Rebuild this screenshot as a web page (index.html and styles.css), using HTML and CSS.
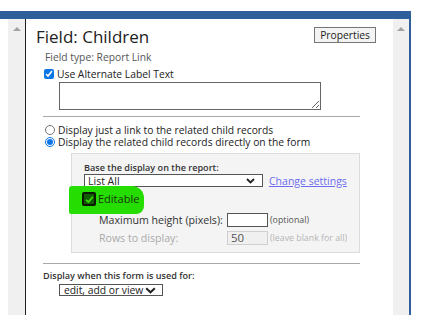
FILE: index.html
```html
<!DOCTYPE html>
<html lang="en">
<head>
    <meta charset="UTF-8">
    <title>Field: Children</title>
    <link rel="stylesheet" href="styles.css">
</head>
<body>
    <div id="frame">
        <div class="gutter"></div>
        <div class="scrollbar"><span class="arrow"></span></div>
        <div id="panel">
            <div class="head">
                <h1>Field: Children</h1>
                <button class="props">Properties</button>
            </div>
            <div class="body">
                <div class="type">Field type: Report Link</div>
                <label class="check"><input type="checkbox" checked>Use Alternate Label Text</label>
                <textarea class="alt-label"></textarea>
                <hr>
                <label class="radio"><input type="radio" name="display">Display just a link to the related child records</label>
                <label class="radio"><input type="radio" name="display" checked>Display the related child records directly on the form</label>

                <div class="options">
                    <div class="opt-label">Base the display on the report:</div>
                    <div class="report-row">
                        <span class="select report">List All
                            <svg width="9" height="6" viewBox="0 0 9 6"><path d="M1 1 L4.5 4.5 L8 1" fill="none" stroke="#222" stroke-width="1.8"/></svg>
                        </span>
                        <a href="#" class="change">Change settings</a>
                    </div>
                    <div class="editable">
                        <span class="box">
                            <svg width="9" height="9" viewBox="0 0 9 9"><path d="M1.2 4.8 L3.5 7 L7.8 1.8" fill="none" stroke="#3be000" stroke-width="1.7"/></svg>
                        </span>
                        <span>Editable</span>
                    </div>
                    <div class="sizes">
                        <span>Maximum height (pixels):</span>
                        <span class="field"></span>
                        <span class="note">(optional)</span>
                        <span class="dim">Rows to display:</span>
                        <span class="field off">50</span>
                        <span class="note dim">(leave blank for all)</span>
                    </div>
                </div>

                <hr class="lower">
                <div class="opt-label">Display when this form is used for:</div>
                <span class="select mode">edit, add or view
                    <svg width="11" height="7" viewBox="0 0 11 7"><path d="M1.2 1.2 L5.5 5.3 L9.8 1.2" fill="none" stroke="#222" stroke-width="2"/></svg>
                </span>
            </div>
        </div>
        <div class="scrollbar right"><span class="arrow"></span></div>
    </div>
</body>
</html>
```

FILE: styles.css
```css
body {
    margin: 0;
    background-color: #ffffff;
    font-family: "Open Sans", "Noto Sans", sans-serif;
    color: #333;
}
#frame {
    display: flex;
    margin-top: 11px;
    width: 409px;
    height: 296px;
    border-top: 8px solid #2e5f9b;
    border-right: 2px solid #2e5f9b;
    overflow: hidden;
}
.gutter {
    width: 8px;
    background-color: #ffffff;
}
.scrollbar {
    width: 17px;
    background-color: #f0f0f0;
    display: flex;
    justify-content: center;
    padding-top: 8px;
    box-sizing: border-box;
}
.scrollbar.right {
    width: 16px;
}
.arrow {
    width: 0;
    height: 0;
    border-left: 4px solid transparent;
    border-right: 4px solid transparent;
    border-bottom: 4px solid #a3a3a3;
}
#panel {
    flex: 1;
    border-left: 1px solid #1e1e1e;
    background-color: #ffffff;
}
.head {
    display: flex;
    justify-content: space-between;
    align-items: flex-start;
    padding: 7px 17px 0 10px;
}
h1 {
    margin: 0;
    font-size: 17px;
    font-weight: 400;
    line-height: 22px;
    color: #222;
}
.props {
    margin-top: 1px;
    font-family: inherit;
    font-size: 10.3px;
    line-height: 13px;
    padding: 0 5px;
    height: 16px;
    background-color: #f3f3f3;
    border: 1px solid #767676;
    color: #222;
    border-radius: 0;
}
.body {
    padding: 3px 0 0 17px;
    width: 317px;
    font-size: 10.3px;
    line-height: 12px;
}
.type {
    padding-left: 2px;
    color: #555;
    margin-bottom: 5px;
}
.check, .radio {
    display: flex;
    align-items: center;
    color: #222;
}
.check input, .radio input {
    width: 10px;
    height: 10px;
    margin: 0 3px 0 1px;
    accent-color: #0a75e6;
}
.radio input {
    margin-left: 2px;
}
.alt-label {
    display: block;
    margin: 2px 0 0 16px;
    width: 262px;
    height: 28px;
    box-sizing: border-box;
    border: 1px solid #666;
    resize: both;
}
hr {
    margin: 6px 0 7px 0;
    border: none;
    border-top: 1px solid #a9a9a9;
}
hr.lower {
    margin-top: 10px;
    margin-bottom: 6px;
}
.options {
    margin: 5px 0 0 28px;
    background-color: #f4f4f4;
    border: 1px solid #dcdcdc;
    padding: 8px 0 0 12px;
    height: 90px;
}
.opt-label {
    font-weight: 600;
    color: #333;
    font-size: 9.1px;
    line-height: 12px;
    white-space: nowrap;
}
.report-row {
    display: flex;
    align-items: center;
}
.select {
    display: flex;
    justify-content: space-between;
    align-items: center;
    border: 1px solid #555;
    background-color: #ffffff;
    color: #222;
    box-sizing: border-box;
    white-space: nowrap;
}
.select.report {
    width: 179px;
    height: 13px;
    padding: 0 7px 0 3px;
    font-size: 10.5px;
}
.change {
    margin-left: 6px;
    color: #6c6cf2;
    font-size: 10.5px;
}
.editable {
    display: inline-flex;
    align-items: center;
    gap: 2px;
    margin: -1px 0 0 -15px;
    padding: 6px 5px 8px 13px;
    background-color: #25dd00;
    border-radius: 3px 12px 8px 2px;
    color: #17330a;
    font-size: 11px;
}
.box {
    display: flex;
    align-items: center;
    justify-content: center;
    width: 14px;
    height: 14px;
    box-sizing: border-box;
    border: 2px solid #0b1700;
    background-color: #0f5f00;
    border-radius: 2px;
}
.sizes {
    display: grid;
    grid-template-columns: 128px 43px auto;
    row-gap: 4px;
    align-items: center;
    margin: -1px 0 0 15px;
    font-size: 10.6px;
    color: #333;
    white-space: nowrap;
}
.field {
    height: 14px;
    width: 41px;
    box-sizing: border-box;
    border: 1px solid #555;
    background-color: #ffffff;
    font-size: 11.5px;
    line-height: 12px;
    padding-left: 3px;
}
.field.off {
    border-color: #cfcfcf;
    background-color: #f0f0f0;
    color: #555;
}
.note {
    font-size: 8.8px;
    color: #555;
}
.dim {
    color: #aaa;
}
.note.dim {
    color: #b5b5b5;
}
.select.mode {
    display: inline-flex;
    margin: 2px 0 0 16px;
    width: 104px;
    height: 12px;
    padding: 0 6px 0 4px;
    font-size: 10.3px;
    line-height: 12px;
}
```
